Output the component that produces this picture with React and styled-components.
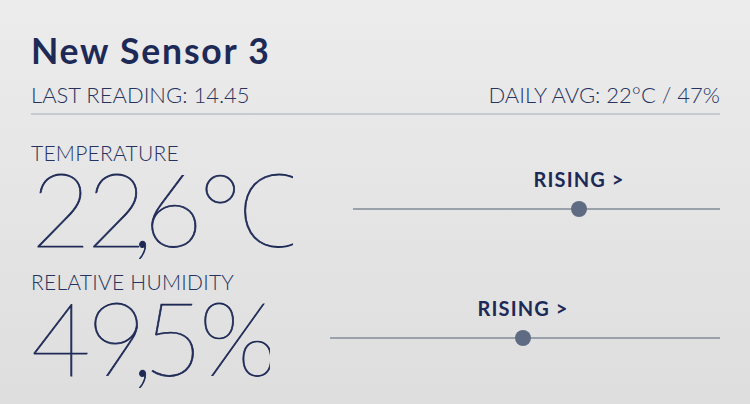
import React from "react";
import styled, { createGlobalStyle } from "styled-components";

const GlobalStyle = createGlobalStyle`
  html, body {
    margin: 0;
    padding: 0;
  }
  body {
    width: 750px;
    height: 404px;
    overflow: hidden;
    background: linear-gradient(180deg, #ececec 0%, #dedede 100%);
    font-family: "Lato", "Noto Sans", sans-serif;
    color: #1e2a56;
  }
`;

const Page = styled.div`
  box-sizing: border-box;
  width: 750px;
  height: 404px;
  padding: 30px 30px 0 31px;
  display: flex;
  flex-direction: column;
`;

const Header = styled.header`
  display: flex;
  flex-direction: column;
  border-bottom: 2px solid #c7cbd1;
  padding-bottom: 5px;
`;

const Title = styled.h1`
  margin: 0;
  font-size: 35.5px;
  line-height: 42px;
  font-weight: 700;
  color: #1d2a57;
  letter-spacing: 1.8px;
`;

const MetaRow = styled.div`
  margin-top: 10px;
  display: flex;
  justify-content: space-between;
  align-items: baseline;
  font-size: 22px;
  line-height: 26px;
  font-weight: 300;
  color: #27335e;
`;

const Section = styled.section`
  display: flex;
  flex-direction: column;
  margin-top: ${(p) => p.$gap}px;
`;

const SectionLabel = styled.div`
  font-size: 21px;
  line-height: 24px;
  font-weight: 300;
  letter-spacing: 0.25px;
  color: #27335e;
`;

const ReadingRow = styled.div`
  display: flex;
  align-items: flex-start;
  margin-top: -10px;
`;

const BigValue = styled.div`
  width: ${(p) => p.$width}px;
  flex: none;
  overflow: hidden;
  white-space: nowrap;
  font-size: 103px;
  line-height: 104px;
  font-weight: 200;
  letter-spacing: -4px;
  color: #1e2a56;
  -webkit-text-stroke: 0.8px #1e2a56;
`;

const Comma = styled.span`
  margin: 0 -6px 0 -11px;
`;

const Trend = styled.div`
  flex: 1;
  margin-left: 60px;
  margin-top: 13px;
  display: flex;
  flex-direction: column;
`;

const TrendLabel = styled.div`
  align-self: flex-start;
  transform: translateX(-50%);
  white-space: nowrap;
  font-size: 20px;
  line-height: 22px;
  font-weight: 700;
  letter-spacing: 1.1px;
  color: #1d2a57;
`;

const Track = styled.div`
  position: relative;
  margin-top: 18px;
  height: 2px;
  background: #9ba1ab;
`;

const Thumb = styled.div`
  position: absolute;
  top: 50%;
  width: 16px;
  height: 16px;
  border-radius: 50%;
  background: #5f6b82;
  transform: translate(-50%, -50%);
`;

function Reading({ label, whole, fraction, unit, width, trend, position, gap }) {
  return (
    <Section $gap={gap}>
      <SectionLabel>{label}</SectionLabel>
      <ReadingRow>
        <BigValue $width={width}>
          {whole}
          <Comma>,</Comma>
          {fraction}
          {unit}
        </BigValue>
        <Trend>
          <TrendLabel style={{ marginLeft: `${position}%` }}>{trend}</TrendLabel>
          <Track>
            <Thumb style={{ left: `${position}%` }} />
          </Track>
        </Trend>
      </ReadingRow>
    </Section>
  );
}

export default function App() {
  return (
    <>
      <GlobalStyle />
      <Page>
        <Header>
          <Title>New Sensor 3</Title>
          <MetaRow>
            <span>LAST READING: 14.45</span>
            <span>DAILY AVG: 22°C / 47%</span>
          </MetaRow>
        </Header>
        <Reading
          gap={26}
          label="TEMPERATURE"
          whole="22"
          fraction="6"
          unit="°C"
          width={262}
          trend="RISING >"
          position={61.6}
        />
        <Reading
          gap={11}
          label="RELATIVE HUMIDITY"
          whole="49"
          fraction="5"
          unit="%"
          width={239}
          trend="RISING >"
          position={49.5}
        />
      </Page>
    </>
  );
}
